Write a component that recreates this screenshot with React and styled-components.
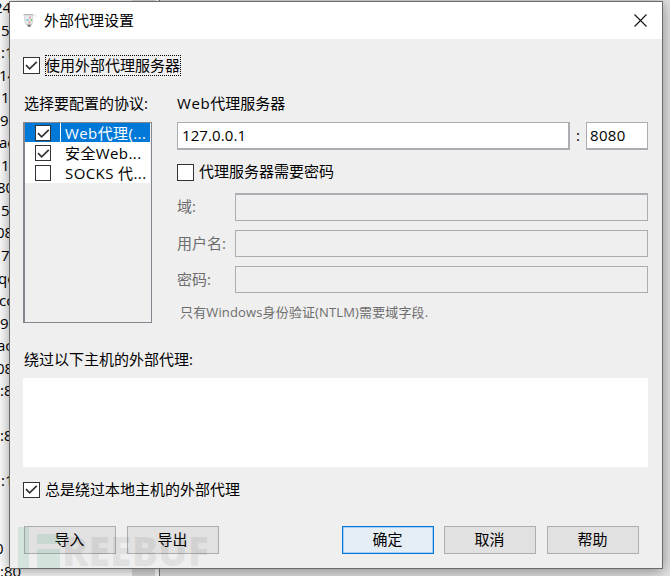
import React, { useState } from "react";
import styled, { createGlobalStyle } from "styled-components";


const logLines = [
    { text: "24", left: -6 },
    { text: "5", left: 1 },
    { text: ":1", left: 1 },
    { text: "14", left: -1 },
    { text: "1", left: 1 },
    { text: "9", left: 0 },
    { text: "ac", left: -1 },
    { text: "1", left: 1 },
    { text: "80", left: -3 },
    { text: "5", left: 1 },
    { text: "08", left: -4 },
    { text: "7", left: 1 },
    { text: "qc", left: -2 },
    { text: "co", left: -1 },
    { text: "9", left: 0 },
    { text: "ac", left: -3 },
    { text: "08", left: -4 },
    { text: ":8", left: 0 },
    { text: "", left: 0 },
    { text: ":8", left: 0 },
    { text: "", left: 0 },
    { text: ":1", left: 1 },
    { text: "", left: 0 },
    { text: "", left: 0 },
    { text: "0", left: -5 },
    { text: ":80", left: 0 },
];

const Check = ({ checked, small, short, onClick }) => (
    <Box $small={small} $short={short} onClick={onClick}>
        { checked &&
            <svg width="13" height="11" viewBox="0 0 13 11">
                <path d="M1 5.2 L4.6 8.8 L11.8 1.8" fill="none" stroke="#333" strokeWidth="1.7" />
            </svg>
        }
    </Box>
);

const JarIcon = () => (
    <svg width="16" height="17" viewBox="0 0 16 17">
        <path d="M2 3 L11 3 L10.5 11 L9 13 L5 13 L3.2 11 Z" fill="#e6eaea" stroke="#cdd1d3" strokeWidth="0.8" />
        <path d="M1.5 2.5 H11" stroke="#b4b4b4" />
        <path d="M11.5 3 Q13.5 2 14 5" fill="none" stroke="#ddd" />
        <rect x="7" y="4.5" width="2" height="2" fill="#e9a5be" />
        <rect x="8.5" y="7" width="1.6" height="2" fill="#8bc88f" />
        <rect x="4.5" y="7" width="2" height="2" fill="#86c9d8" />
        <rect x="6.5" y="9.5" width="2" height="2" fill="#e3a19c" />
        <path d="M5 12.5 H9.5 L8.5 15 H6 Z" fill="#858585" />
    </svg>
);

const Watermark = () => (
    <WatermarkLayer>
        <svg width="200" height="44" viewBox="0 0 200 44">
            <g fill="#2fa56d" fillOpacity="0.14">
                <rect x="0" y="1" width="11" height="41" />
                <rect x="19" y="8" width="23" height="10" />
                <rect x="19" y="23" width="23" height="19" />
            </g>
            <text x="44" y="40" textLength="147" lengthAdjust="spacingAndGlyphs" fill="#000" fillOpacity="0.065">REEBUF</text>
        </svg>
    </WatermarkLayer>
);

const App = () => {
    const [useProxy, setUseProxy] = useState(true);
    const [needPassword, setNeedPassword] = useState(false);
    const [bypassLocal, setBypassLocal] = useState(true);
    const [protocols, setProtocols] = useState([
        { name: "Web代理(...", checked: true },
        { name: "安全Web...", checked: true },
        { name: "SOCKS 代...", checked: false },
    ]);

    const toggleProtocol = (index) => {
        setProtocols(prev => prev.map((p, i) => i === index ? { ...p, checked: !p.checked } : p));
    };

    return (
        <Desktop>
            <GlobalStyle />
            <LogPane>
                <LogText>
                    { logLines.map((line, i) => <LogLine key={i} $left={line.left}>{line.text}</LogLine>) }
                </LogText>
                <ScrollBar />
            </LogPane>
            <SidePane />

            <Dialog>
                <TitleBar>
                    <JarIcon />
                    <Title>外部代理设置</Title>
                    <svg width="13" height="13" viewBox="0 0 13 13">
                        <path d="M0.5 0.5 L12.5 12.5 M12.5 0.5 L0.5 12.5" stroke="#111" strokeWidth="1.1" />
                    </svg>
                </TitleBar>

                <Body>
                    <CheckRow $height={21}>
                        <Check checked={useProxy} onClick={() => setUseProxy(!useProxy)} />
                        <FocusLabel>使用外部代理服务器</FocusLabel>
                    </CheckRow>

                    <Columns>
                        <div>
                            <Heading $indent={1}>选择要配置的协议:</Heading>
                            <List>
                                { protocols.map((p, i) => (
                                    <ListRow key={p.name} $selected={i === 0}>
                                        <ListCheck>
                                            <Check small checked={p.checked} onClick={() => toggleProtocol(i)} />
                                        </ListCheck>
                                        <ListName>{p.name}</ListName>
                                    </ListRow>
                                ))}
                            </List>
                        </div>

                        <div>
                            <Heading><Latin>Web</Latin>代理服务器</Heading>
                            <ServerRow>
                                <HostInput defaultValue="127.0.0.1" />
                                <Colon>:</Colon>
                                <PortInput defaultValue="8080" />
                            </ServerRow>
                            <PasswordRow $height={24}>
                                <Check checked={needPassword} onClick={() => setNeedPassword(!needPassword)} />
                                <Label>代理服务器需要密码</Label>
                            </PasswordRow>
                            <Fields>
                                <FieldLabel>域:</FieldLabel>
                                <DisabledInput disabled $thick />
                                <FieldLabel>用户名:</FieldLabel>
                                <DisabledInput disabled />
                                <FieldLabel>密码:</FieldLabel>
                                <DisabledInput disabled />
                            </Fields>
                            <Hint>只有Windows身份验证(NTLM)需要域字段.</Hint>
                        </div>
                    </Columns>

                    <BypassHeading $indent={1}>绕过以下主机的外部代理:</BypassHeading>
                    <BypassArea />
                    <BypassRow $height={21}>
                        <Check short checked={bypassLocal} onClick={() => setBypassLocal(!bypassLocal)} />
                        <Label>总是绕过本地主机的外部代理</Label>
                    </BypassRow>

                    <Footer>
                        <ButtonGroup $gap={11}>
                            <Button>导入</Button>
                            <Button>导出</Button>
                        </ButtonGroup>
                        <OkGroup>
                            <Button $primary>确定</Button>
                            <ButtonGroup $gap={11}>
                                <Button>取消</Button>
                                <Button>帮助</Button>
                            </ButtonGroup>
                        </OkGroup>
                    </Footer>
                </Body>
            </Dialog>
            <Watermark />
        </Desktop>
    );
}

const GlobalStyle = createGlobalStyle`
    * {
        box-sizing: border-box;
    }

    body {
        margin: 0;
        overflow: hidden;
        color: #000;
        font-family: "Open Sans", "Noto Sans CJK SC", sans-serif;
        font-size: 15px;
    }
`;

const Desktop = styled.div`
    position: relative;
    display: flex;
    width: 670px;
    height: 576px;
    overflow: hidden;
    background-color: #e3e3e3;
`;

const LogPane = styled.div`
    display: flex;
    justify-content: space-between;
    width: 160px;
    border-right: 1px solid #777;
    background-color: #fff;
`;

const LogText = styled.div`
    width: 60px;
    margin-top: -4px;
`;

const LogLine = styled.div`
    height: 22.55px;
    line-height: 22.55px;
    margin-left: ${props => props.$left}px;
    white-space: nowrap;
`;

const ScrollBar = styled.div`
    width: 23px;
    margin-right: 4px;
    background-color: #dcdcdc;
`;

const SidePane = styled.div`
    flex: 1;
    background-color: #e3e3e3;
`;

const Dialog = styled.div`
    position: absolute;
    left: 9px;
    top: 1px;
    width: 654px;
    height: 568px;
    border: 1px solid #6b6b6b;
    background-color: #efefef;
    box-shadow: 0 2px 14px rgba(0, 0, 0, 0.42);
`;

const TitleBar = styled.div`
    display: flex;
    align-items: center;
    height: 37px;
    padding: 0 15px 0 12px;
    background-color: #fff;
`;

const Title = styled.div`
    flex: 1;
    margin-left: 6px;
    padding-bottom: 2px;
`;

const Body = styled.div`
    padding: 16px 14px 0 13px;
`;

const CheckRow = styled.div`
    display: flex;
    align-items: center;
    height: ${props => props.$height}px;
`;

const Box = styled.span`
    display: flex;
    flex-shrink: 0;
    align-items: center;
    justify-content: center;
    width: ${props => props.$small ? 16 : 17}px;
    height: ${props => props.$small || props.$short ? 16 : 17}px;
    border: 1px solid #333;
    background-color: #fff;
`;

const Label = styled.span`
    margin-left: 5px;
    padding-bottom: 2px;
    line-height: 20px;
    white-space: nowrap;
`;

const FocusLabel = styled(Label)`
    height: 21px;
    padding: 0;
    line-height: 19px;
    border: 1px dotted #000;
    text-indent: -1px;
`;

const Latin = styled.span`
    letter-spacing: 0.6px;
`;

const Columns = styled.div`
    display: grid;
    grid-template-columns: 129px 471px;
    column-gap: 25px;
    margin-top: 17px;
`;

const Heading = styled.div`
    height: 20px;
    line-height: 20px;
    margin-bottom: 9px;
    padding-left: ${props => props.$indent || 0}px;
    white-space: nowrap;
`;

const List = styled.div`
    height: 201px;
    border: 1px solid #828790;
    border-left-width: 2px;
    padding-right: 1px;
`;

const ListRow = styled.div`
    display: flex;
    height: 20px;
    background-color: ${props => props.$selected ? "#0078d7" : "#fff"};
    color: ${props => props.$selected ? "#fff" : "#000"};
    border-bottom: ${props => props.$selected ? "1px solid #fff" : "none"};
`;

const ListCheck = styled.div`
    width: 36px;
    height: 100%;
    padding: 2px 0 0 10px;
    border-right: 1px solid #fff;
`;

const ListName = styled.div`
    padding-left: 4px;
    line-height: 20px;
    letter-spacing: 0.4px;
    white-space: nowrap;
`;

const ServerRow = styled.div`
    display: flex;
    height: 28px;
`;

const Input = styled.input`
    height: 28px;
    padding: 0 4px 2px;
    border: 1px solid #abadb3;
    border-bottom-width: 2px;
    border-radius: 0;
    outline: none;
    background-color: #fff;
    font: inherit;
`;

const HostInput = styled(Input)`
    width: 393px;
    border-right-width: 2px;
    letter-spacing: 0.1px;
`;

const PortInput = styled(Input)`
    width: 62px;
    padding: 0 3px 2px;
    letter-spacing: 0.3px;
`;

const Colon = styled.span`
    width: 16px;
    line-height: 26px;
    text-align: center;
`;

const PasswordRow = styled(CheckRow)`
    margin-top: 10px;
`;

const Fields = styled.div`
    display: grid;
    grid-template-columns: 58px 413px;
    row-gap: 9px;
    margin-top: 9px;
`;

const FieldLabel = styled.label`
    line-height: 27px;
    height: 27px;
    color: #6d6d6d;
`;

const DisabledInput = styled(Input)`
    height: ${props => props.$thick ? 28 : 27}px;
    border-width: ${props => props.$thick ? "2px 1px 1px" : "1px"};
    background-color: #efefef;
`;

const Hint = styled.div`
    height: 20px;
    margin-top: 10px;
    padding-left: 3px;
    line-height: 18px;
    color: #6d6d6d;
    font-size: 13px;
    letter-spacing: 0.14px;
    white-space: nowrap;
`;

const BypassHeading = styled(Heading)`
    margin-top: 26px;
`;

const BypassArea = styled.textarea`
    display: block;
    width: 625px;
    height: 89px;
    border: none;
    outline: none;
    resize: none;
    background-color: #fff;
`;

const BypassRow = styled(CheckRow)`
    margin-top: 12px;
`;

const Footer = styled.div`
    display: flex;
    justify-content: space-between;
    margin-top: 26px;
    padding: 0 9px 0 1px;
`;

const ButtonGroup = styled.div`
    display: flex;
    gap: ${props => props.$gap}px;
`;

const OkGroup = styled.div`
    display: flex;
    gap: 10px;
`;

const Button = styled.button`
    width: 92px;
    height: 28px;
    padding: 0 1px 3px 0;
    border: 1px solid ${props => props.$primary ? "#0078d7" : "#adadad"};
    border-radius: 0;
    background-color: ${props => props.$primary ? "#e5edf5" : "#e1e1e1"};
    box-shadow: ${props => props.$primary ? "inset 0 0 0 1px #a5d0f3" : "none"};
    color: #000;
    font: inherit;
`;

const WatermarkLayer = styled.div`
    position: absolute;
    left: 18px;
    top: 526px;
    pointer-events: none;

    text {
        font-family: "Open Sans", sans-serif;
        font-size: 41px;
        font-weight: 800;
    }
`;

export default App;
